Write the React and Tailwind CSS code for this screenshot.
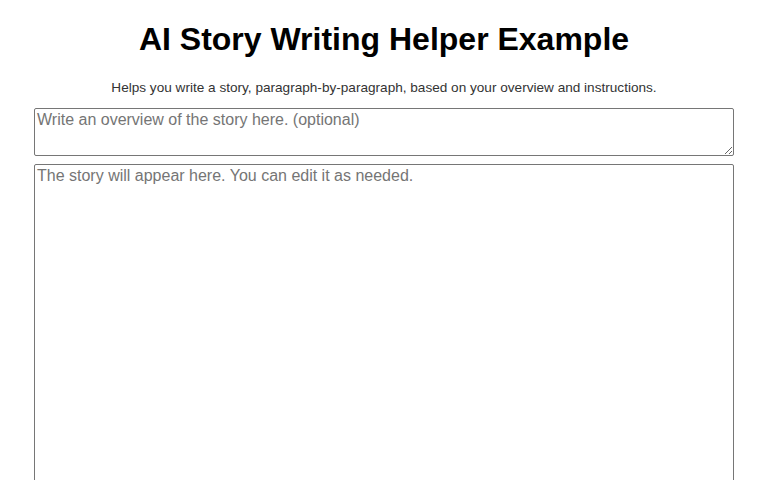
export default function App() {
  return (
    <div className="min-h-screen bg-white font-['Liberation_Sans',Arial,sans-serif]">
      <div className="mx-auto w-[700px]">
        <h1 className="pt-[21px] text-center text-[32px] font-bold leading-[37px] text-black">
          AI Story Writing Helper Example
        </h1>
        <p className="mt-[22px] text-center text-[13.6px] leading-[16px] text-[#333]">
          Helps you write a story, paragraph-by-paragraph, based on your overview and instructions.
        </p>
        <div className="mt-[12px] flex flex-col gap-2">
          <textarea
            className="block h-[48px] w-full resize-y rounded-[2px] border border-[#767676] p-[2px] text-[16px] leading-[18px] text-black placeholder:text-[#757575]"
            placeholder="Write an overview of the story here. (optional)"
          />
          <textarea
            className="block h-[420px] w-full resize-none rounded-[2px] border border-[#767676] p-[2px] text-[16px] leading-[18px] text-black placeholder:text-[#757575]"
            placeholder="The story will appear here. You can edit it as needed."
          />
        </div>
      </div>
    </div>
  )
}
